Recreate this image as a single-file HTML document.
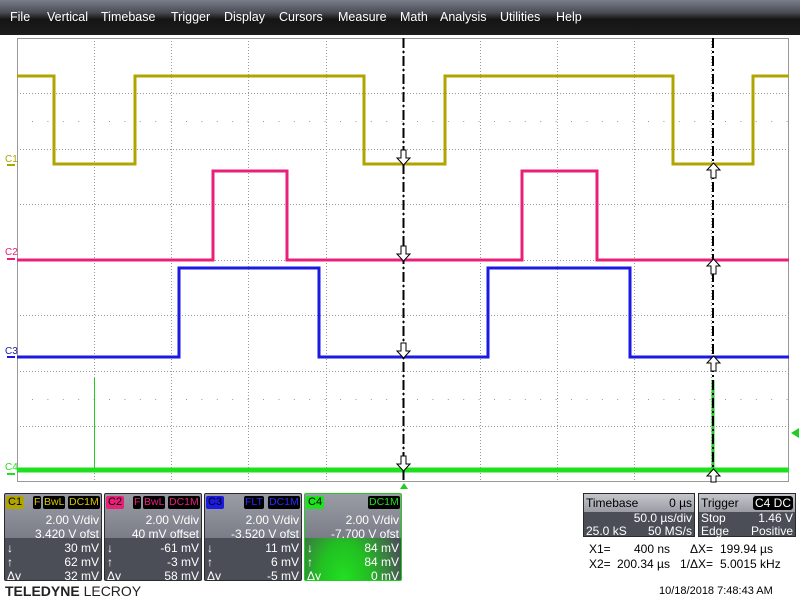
<!DOCTYPE html>
<html><head><meta charset="utf-8"><style>
*{margin:0;padding:0;box-sizing:border-box}
body{width:800px;height:600px;background:#fff;font-family:"Liberation Sans",sans-serif;position:relative;overflow:hidden}
.menu{position:absolute;left:0;top:0;width:800px;height:35px;background:linear-gradient(#7a7e8a 0,#4a4d55 35%,#151515 55%,#1c1c1c 100%);color:#fff;font-size:12.5px}
.menu span{position:absolute;top:10px}
.p{position:absolute;top:493px;width:98px;height:88px;background:#4b4e57;border:1px solid #2a2a2a;color:#fff;font-size:12px;border-radius:2px;overflow:hidden}
.p .top{height:44px;background:linear-gradient(#9a9ca5,#7a7d87)}
.p .r{position:absolute;right:2px;text-align:right;white-space:nowrap}
.p .l{position:absolute;left:2px}
.tag{position:absolute;top:2px;height:13px;font-size:11px;line-height:13px;padding:0 2px;border-radius:2px}
.bx{position:absolute;top:2px;height:13px;line-height:13px;font-size:10.5px;background:#000;padding:0 1px;border-radius:2px;white-space:nowrap}
.tb{position:absolute;top:493px;height:44px;background:#4b4e57;border:1px solid #2a2a2a;color:#fff;font-size:12px}
.tb .h{height:18px;background:linear-gradient(#c4c6cc,#9a9ca5);color:#000}
.t{position:absolute;white-space:nowrap;font-size:12px}
</style></head><body>
<div class="menu">
<span style="left:10px">File</span><span style="left:47px">Vertical</span><span style="left:101px">Timebase</span><span style="left:171px">Trigger</span><span style="left:224px">Display</span><span style="left:279px">Cursors</span><span style="left:338px">Measure</span><span style="left:400px">Math</span><span style="left:440px">Analysis</span><span style="left:500px">Utilities</span><span style="left:556px">Help</span>
</div>
<svg width="800" height="490" style="position:absolute;left:0;top:0">
<g stroke="#999" stroke-width="1" stroke-dasharray="1,2">
<line x1="94.5" y1="38" x2="94.5" y2="482"/><line x1="171.5" y1="38" x2="171.5" y2="482"/><line x1="248.5" y1="38" x2="248.5" y2="482"/><line x1="326.5" y1="38" x2="326.5" y2="482"/><line x1="403.5" y1="38" x2="403.5" y2="482"/><line x1="480.5" y1="38" x2="480.5" y2="482"/><line x1="557.5" y1="38" x2="557.5" y2="482"/><line x1="634.5" y1="38" x2="634.5" y2="482"/><line x1="711.5" y1="38" x2="711.5" y2="482"/>
<line x1="17" y1="93.5" x2="789" y2="93.5"/><line x1="17" y1="149.5" x2="789" y2="149.5"/><line x1="17" y1="204.5" x2="789" y2="204.5"/><line x1="17" y1="260.5" x2="789" y2="260.5"/><line x1="17" y1="315.5" x2="789" y2="315.5"/><line x1="17" y1="371.5" x2="789" y2="371.5"/><line x1="17" y1="426.5" x2="789" y2="426.5"/>
</g>
<g stroke="#999" stroke-dasharray="1,14.4"><line x1="32" y1="121.5" x2="789" y2="121.5"/><line x1="32" y1="399.5" x2="789" y2="399.5"/></g>
<rect x="17.5" y="38.5" width="771" height="443" fill="none" stroke="#999"/>
<polyline fill="none" stroke="#b0a500" stroke-width="3" points="17,76 54,76 54,164 135,164 135,76 364,76 364,164 445,164 445,76 673,76 673,164 753,164 753,76 789,76"/>
<polyline fill="none" stroke="#e8207a" stroke-width="3" points="17,260 213,260 213,171 287,171 287,260 522,260 522,171 597,171 597,260 789,260"/>
<polyline fill="none" stroke="#1a1ae0" stroke-width="3" points="17,357 179,357 179,268 319,268 319,357 488,357 488,268 630,268 630,357 789,357"/>
<line x1="17" y1="470" x2="789" y2="470" stroke="#1ee01e" stroke-width="5"/>
<line x1="94.5" y1="378" x2="94.5" y2="468" stroke="#2c2" stroke-width="1"/>
<line x1="713" y1="380" x2="713" y2="468" stroke="#2c2" stroke-width="3"/>
<line x1="403.5" y1="38" x2="403.5" y2="482" stroke="#000" stroke-width="2" stroke-dasharray="10,3,2,3"/>
<line x1="713" y1="38" x2="713" y2="482" stroke="#000" stroke-width="2" stroke-dasharray="10,3,2,3"/>
<g fill="#fff" stroke="#000" stroke-width="1">
<path d="M401,150h5v8h4l-6.5,7l-6.5,-7h4z"/><path d="M401,246h5v8h4l-6.5,7l-6.5,-7h4z"/><path d="M401,343h5v8h4l-6.5,7l-6.5,-7h4z"/><path d="M401,456h5v8h4l-6.5,7l-6.5,-7h4z"/>
<path d="M711,178h5v-8h4l-6.5,-7l-6.5,7h4z"/><path d="M711,274h5v-8h4l-6.5,-7l-6.5,7h4z"/><path d="M711,371h5v-8h4l-6.5,-7l-6.5,7h4z"/><path d="M711,482h5v-6h4l-6.5,-7l-6.5,7h4z"/>
</g>
<path d="M799,428v10l-8,-5z" fill="#2c2"/>
<path d="M404,483l-4,6h8z" fill="#2c2"/>
<text x="5" y="162" fill="#b0a500" font-size="10" font-family="Liberation Sans">C1</text><line x1="7" y1="165" x2="15" y2="165" stroke="#b0a500" stroke-width="2"/>
<text x="5" y="255" fill="#e8207a" font-size="10" font-family="Liberation Sans">C2</text><line x1="7" y1="259" x2="15" y2="259" stroke="#e8207a" stroke-width="2"/>
<text x="5" y="354" fill="#1a1aa0" font-size="10" font-family="Liberation Sans">C3</text><line x1="7" y1="357" x2="15" y2="357" stroke="#1a1ae0" stroke-width="2"/>
<text x="5" y="470" fill="#1ee01e" font-size="10" font-family="Liberation Sans">C4</text><line x1="7" y1="474" x2="15" y2="474" stroke="#1ee01e" stroke-width="2"/>
</svg>

<div class="p" style="left:4px"><div class="top"></div>
<div class="tag" style="left:1px;background:#b0a500;color:#000">C1</div>
<div class="bx" style="left:28px;color:#d6c800">F</div><div class="bx" style="left:38px;color:#d6c800">BwL</div><div class="bx" style="left:63px;color:#d6c800">DC1M</div>
<div class="r" style="top:19px">2.00 V/div</div><div class="r" style="top:33px">3.420 V ofst</div>
<div class="l" style="top:47px">↓</div><div class="r" style="top:47px">30 mV</div>
<div class="l" style="top:61px">↑</div><div class="r" style="top:61px">62 mV</div>
<div class="l" style="top:75px">Δy</div><div class="r" style="top:75px">32 mV</div></div>

<div class="p" style="left:104px"><div class="top"></div>
<div class="tag" style="left:1px;background:#e8207a;color:#000">C2</div>
<div class="bx" style="left:28px;color:#e8207a">F</div><div class="bx" style="left:38px;color:#e8207a">BwL</div><div class="bx" style="left:63px;color:#e8207a">DC1M</div>
<div class="r" style="top:19px">2.00 V/div</div><div class="r" style="top:33px">40 mV offset</div>
<div class="l" style="top:47px">↓</div><div class="r" style="top:47px">-61 mV</div>
<div class="l" style="top:61px">↑</div><div class="r" style="top:61px">-3 mV</div>
<div class="l" style="top:75px">Δy</div><div class="r" style="top:75px">58 mV</div></div>

<div class="p" style="left:204px"><div class="top"></div>
<div class="tag" style="left:1px;background:#1a1ae0;color:#000">C3</div>
<div class="bx" style="left:39px;color:#2a2aff">FLT</div><div class="bx" style="left:63px;color:#2a2aff">DC1M</div>
<div class="r" style="top:19px">2.00 V/div</div><div class="r" style="top:33px">-3.520 V ofst</div>
<div class="l" style="top:47px">↓</div><div class="r" style="top:47px">11 mV</div>
<div class="l" style="top:61px">↑</div><div class="r" style="top:61px">6 mV</div>
<div class="l" style="top:75px">Δy</div><div class="r" style="top:75px">-5 mV</div></div>

<div class="p" style="left:304px;border:1px solid #2c2;background:radial-gradient(ellipse at 40% 100%,#22e022 0,#22c022 30%,#4b4e57 75%)"><div class="top"></div>
<div class="tag" style="left:1px;background:#1ee01e;color:#000">C4</div>
<div class="bx" style="left:63px;color:#1ee01e">DC1M</div>
<div class="r" style="top:19px">2.00 V/div</div><div class="r" style="top:33px">-7.700 V ofst</div>
<div class="l" style="top:47px">↓</div><div class="r" style="top:47px">84 mV</div>
<div class="l" style="top:61px">↑</div><div class="r" style="top:61px">84 mV</div>
<div class="l" style="top:75px">Δy</div><div class="r" style="top:75px">0 mV</div></div>

<div class="tb" style="left:583px;width:112px"><div class="h"><span class="t" style="left:2px;top:2px">Timebase</span><span class="t" style="right:2px;top:2px">0 µs</span></div>
<span class="t" style="right:2px;top:17px">50.0 µs/div</span><span class="t" style="left:2px;top:30px">25.0 kS</span><span class="t" style="right:2px;top:30px">50 MS/s</span></div>
<div class="tb" style="left:698px;width:98px"><div class="h"><span class="t" style="left:2px;top:2px">Trigger</span><span class="t" style="right:2px;top:2px;background:#000;color:#fff;padding:0 2px;border-radius:3px">C4 DC</span></div>
<span class="t" style="left:2px;top:17px">Stop</span><span class="t" style="right:2px;top:17px">1.46 V</span><span class="t" style="left:2px;top:30px">Edge</span><span class="t" style="right:2px;top:30px">Positive</span></div>

<span class="t" style="left:589px;top:542px">X1=</span><span class="t" style="left:634px;top:542px">400 ns</span><span class="t" style="left:690px;top:542px">ΔX=</span><span class="t" style="left:720px;top:542px">199.94 µs</span>
<span class="t" style="left:589px;top:557px">X2=</span><span class="t" style="left:617px;top:557px">200.34 µs</span><span class="t" style="left:680px;top:557px">1/ΔX=</span><span class="t" style="left:720px;top:557px">5.0015 kHz</span>
<span class="t" style="left:659px;top:585px;font-size:11px">10/18/2018 7:48:43 AM</span>
<span class="t" style="left:5px;top:583px;font-size:14px;color:#222"><b>TELEDYNE</b> LECROY</span>
</body></html>
